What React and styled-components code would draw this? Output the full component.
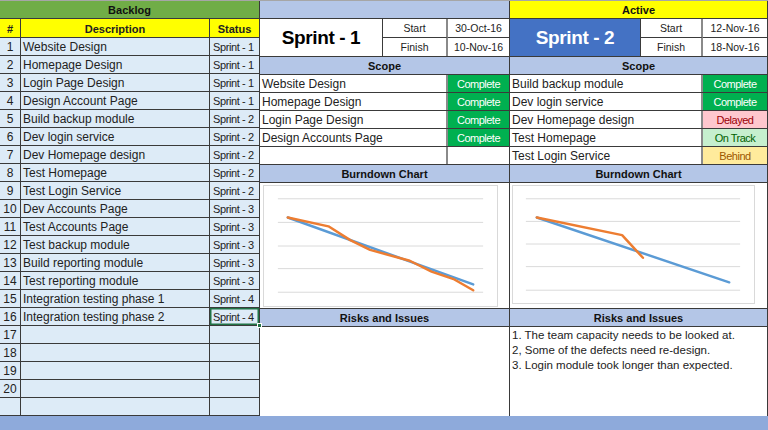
import React from "react";
import styled, { createGlobalStyle } from "styled-components";

const LINE = "#3a3a3a";
const SOFT = "#8a8a8a";

const GlobalStyle = createGlobalStyle`
  html, body { margin: 0; padding: 0; background: #ffffff; }
  body { font-family: "Liberation Sans", Arial, sans-serif; color: #111; overflow: hidden; }
  *, *::before, *::after { box-sizing: border-box; }
`;

const Page = styled.div`
  width: 768px;
  height: 430px;
  display: flex;
  flex-direction: column;
  border-top: 1px solid #a6a6a6;
`;

const Main = styled.div`
  display: flex;
  height: 415px;
`;

const BottomBar = styled.div`
  flex: 1;
  background: #8eaadb;
`;

const Panel = styled.div`
  width: ${(p) => p.$w}px;
  display: flex;
  flex-direction: column;
  border-right: 1px solid ${LINE};
`;

const Band = styled.div`
  height: ${(p) => p.$h || 18}px;
  flex-shrink: 0;
  background: ${(p) => p.$bg};
  border-bottom: 1px solid ${LINE};
  display: flex;
  align-items: center;
  justify-content: center;
  font-weight: bold;
  font-size: 11px;
  color: #111;
`;

const TableRow = styled.div`
  display: flex;
  height: ${(p) => p.$h || 18}px;
  flex-shrink: 0;
  background: ${(p) => p.$bg || "#ddebf7"};
  border-bottom: 1px solid ${LINE};
`;

const Cell = styled.div`
  position: relative;
  width: ${(p) => (p.$w ? `${p.$w}px` : "auto")};
  flex: ${(p) => (p.$w ? "none" : 1)};
  border-right: 1px solid ${LINE};
  display: flex;
  align-items: center;
  justify-content: ${(p) => p.$align || "flex-start"};
  padding: 0 ${(p) => p.$pad ?? 2}px;
  padding-top: 1px;
  font-size: ${(p) => p.$size || 12}px;
  font-weight: ${(p) => (p.$bold ? "bold" : "normal")};
  letter-spacing: ${(p) => p.$ls || 0}px;
  white-space: nowrap;
  overflow: visible;
  color: #222;
  &:last-child { border-right: none; }
`;

const SelectedCell = styled(Cell)`
  box-shadow: inset 0 0 0 1.5px #217346;
  &::after {
    content: "";
    position: absolute;
    right: -3px;
    bottom: -3px;
    width: 5px;
    height: 5px;
    background: #217346;
    border: 1px solid #fff;
  }
`;

const TitleBlock = styled.div`
  display: grid;
  grid-template-columns: ${(p) => p.$cols};
  grid-template-rows: 19px 18px;
  height: 38px;
  flex-shrink: 0;
  border-bottom: 1px solid ${LINE};
`;

const SprintTitle = styled.div`
  grid-row: span 2;
  background: ${(p) => p.$bg};
  color: ${(p) => p.$fg};
  border-right: 1px solid ${LINE};
  display: flex;
  align-items: center;
  justify-content: center;
  font-size: 19px;
  font-weight: bold;
  letter-spacing: -0.4px;
`;

const MetaCell = styled.div`
  display: flex;
  align-items: center;
  justify-content: center;
  font-size: 10.5px;
  color: #222;
  background: #fff;
  border-right: ${(p) => (p.$last ? "none" : `2px solid ${SOFT}`)};
  border-bottom: ${(p) => (p.$top ? `1px solid ${LINE}` : "none")};
`;

const ScopeRow = styled.div`
  display: flex;
  height: 18px;
  flex-shrink: 0;
  background: #fff;
  border-bottom: 1px solid ${LINE};
`;

const ScopeText = styled.div`
  width: ${(p) => p.$w}px;
  flex: none;
  border-right: 2px solid ${SOFT};
  display: flex;
  align-items: center;
  padding: 1px 2px 0;
  font-size: 12px;
  color: #222;
  white-space: nowrap;
`;

const StatusBadge = styled.div`
  flex: 1;
  display: flex;
  align-items: center;
  justify-content: center;
  padding-top: 1px;
  background: ${(p) => p.$bg};
  color: ${(p) => p.$fg};
  font-size: 11px;
  letter-spacing: -0.5px;
`;

const ChartCell = styled.div`
  height: 126px;
  flex-shrink: 0;
  padding: ${(p) => p.$pad};
  border-bottom: 1px solid ${LINE};
  background: #fff;
`;

const ChartBox = styled.div`
  width: 100%;
  height: 100%;
  background: #fff;
  border: 1px solid #d9d9d9;
  svg { display: block; width: 100%; height: 100%; }
`;

const RisksBody = styled.div`
  flex: 1;
  background: #fff;
  padding: 1px 2px;
  font-size: 11.5px;
  line-height: 15px;
  color: #222;
`;

const backlog = [
  ["Website Design", "Sprint - 1"],
  ["Homepage Design", "Sprint - 1"],
  ["Login Page Design", "Sprint - 1"],
  ["Design Account Page", "Sprint - 1"],
  ["Build backup module", "Sprint - 2"],
  ["Dev login service", "Sprint - 2"],
  ["Dev Homepage design", "Sprint - 2"],
  ["Test Homepage", "Sprint - 2"],
  ["Test Login Service", "Sprint - 2"],
  ["Dev Accounts Page", "Sprint - 3"],
  ["Test Accounts Page", "Sprint - 3"],
  ["Test backup module", "Sprint - 3"],
  ["Build reporting module", "Sprint - 3"],
  ["Test reporting module", "Sprint - 3"],
  ["Integration testing phase 1", "Sprint - 4"],
  ["Integration testing phase 2", "Sprint - 4"],
];

const STATUS = {
  Complete: { bg: "#00b050", fg: "#ffffff" },
  Delayed: { bg: "#ffc7ce", fg: "#9c0006" },
  "On Track": { bg: "#c6efce", fg: "#006100" },
  Behind: { bg: "#ffeb9c", fg: "#9c5700" },
};

const sprints = [
  {
    w: 250,
    band: { bg: "#b4c6e7", label: "" },
    title: "Sprint - 1",
    titleBg: "#ffffff",
    titleFg: "#000000",
    cols: "123px 65px 1fr",
    start: "30-Oct-16",
    finish: "10-Nov-16",
    descW: 188,
    scope: [
      ["Website Design", "Complete"],
      ["Homepage Design", "Complete"],
      ["Login Page Design", "Complete"],
      ["Design Accounts Page", "Complete"],
      ["", ""],
    ],
    chartPad: "2px 11px 1px 3px",
    chart: {
      w: 235,
      h: 122,
      grid: { x1: 14, x2: 221, ys: [13, 37, 61, 84, 108] },
      ideal: [[24, 32], [211, 100]],
      actual: [[24, 32], [65, 41], [87, 55], [107, 65], [147, 76], [169, 87], [192, 95], [211, 106]],
    },
    risks: [],
  },
  {
    w: 258,
    band: { bg: "#ffff00", label: "Active" },
    title: "Sprint - 2",
    titleBg: "#4472c4",
    titleFg: "#ffffff",
    cols: "131px 62px 1fr",
    start: "12-Nov-16",
    finish: "18-Nov-16",
    descW: 193,
    scope: [
      ["Build backup module", "Complete"],
      ["Dev login service", "Complete"],
      ["Dev Homepage design", "Delayed"],
      ["Test Homepage", "On Track"],
      ["Test Login Service", "Behind"],
    ],
    chartPad: "2px 12px 4px 2px",
    chart: {
      w: 243,
      h: 119,
      grid: { x1: 13, x2: 229, ys: [13, 36, 59, 82, 106] },
      ideal: [[24, 32], [218, 98]],
      actual: [[24, 32], [110, 50], [131, 73]],
    },
    risks: [
      "1. The team capacity needs to be looked at.",
      "2, Some of the defects need re-design.",
      "3. Login module took longer than expected.",
    ],
  },
];

const pts = (arr) => arr.map((p) => p.join(",")).join(" ");

function Burndown({ c }) {
  return (
    <ChartBox>
      <svg viewBox={`0 0 ${c.w} ${c.h}`} preserveAspectRatio="none">
        {c.grid.ys.map((y) => (
          <line key={y} x1={c.grid.x1} x2={c.grid.x2} y1={y} y2={y} stroke="#d9d9d9" strokeWidth="1" />
        ))}
        <polyline points={pts(c.ideal)} fill="none" stroke="#5b9bd5" strokeWidth="2.5" strokeLinejoin="round" strokeLinecap="round" />
        <polyline points={pts(c.actual)} fill="none" stroke="#ed7d31" strokeWidth="2.5" strokeLinejoin="round" strokeLinecap="round" />
      </svg>
    </ChartBox>
  );
}

function Sprint({ s }) {
  return (
    <Panel $w={s.w}>
      <Band $bg={s.band.bg}>{s.band.label}</Band>
      <TitleBlock $cols={s.cols}>
        <SprintTitle $bg={s.titleBg} $fg={s.titleFg}>{s.title}</SprintTitle>
        <MetaCell $top>Start</MetaCell>
        <MetaCell $top $last>{s.start}</MetaCell>
        <MetaCell>Finish</MetaCell>
        <MetaCell $last>{s.finish}</MetaCell>
      </TitleBlock>
      <Band $bg="#b4c6e7">Scope</Band>
      {s.scope.map(([text, st], i) => (
        <ScopeRow key={i}>
          <ScopeText $w={s.descW}>{text}</ScopeText>
          <StatusBadge $bg={st ? STATUS[st].bg : "#fff"} $fg={st ? STATUS[st].fg : "#000"}>
            {st}
          </StatusBadge>
        </ScopeRow>
      ))}
      <Band $bg="#b4c6e7">Burndown Chart</Band>
      <ChartCell $pad={s.chartPad}>
        <Burndown c={s.chart} />
      </ChartCell>
      <Band $bg="#b4c6e7">Risks and Issues</Band>
      <RisksBody>
        {s.risks.map((r) => (
          <div key={r}>{r}</div>
        ))}
      </RisksBody>
    </Panel>
  );
}

export default function App() {
  const extra = [17, 18, 19, 20, ""];
  return (
    <>
      <GlobalStyle />
      <Page>
        <Main>
          <Panel $w={260}>
            <Band $bg="#70ad47">Backlog</Band>
            <TableRow $h={19} $bg="#ffff00">
              <Cell $w={21} $align="center" $bold $size={11}>#</Cell>
              <Cell $w={189} $align="center" $bold $size={11}>Description</Cell>
              <Cell $align="center" $bold $size={11}>Status</Cell>
            </TableRow>
            {backlog.map(([d, st], i) => {
              const Status = i === backlog.length - 1 ? SelectedCell : Cell;
              return (
                <TableRow key={i}>
                  <Cell $w={21} $align="center" $pad={0}>{i + 1}</Cell>
                  <Cell $w={189} $pad={2}>{d}</Cell>
                  <Status $pad={3} $size={11} $ls={-0.4}>{st}</Status>
                </TableRow>
              );
            })}
            {extra.map((n, i) => (
              <TableRow key={`e${i}`}>
                <Cell $w={21} $align="center" $pad={0}>{n}</Cell>
                <Cell $w={189} />
                <Cell />
              </TableRow>
            ))}
          </Panel>
          {sprints.map((s) => (
            <Sprint key={s.title} s={s} />
          ))}
        </Main>
        <BottomBar />
      </Page>
    </>
  );
}
